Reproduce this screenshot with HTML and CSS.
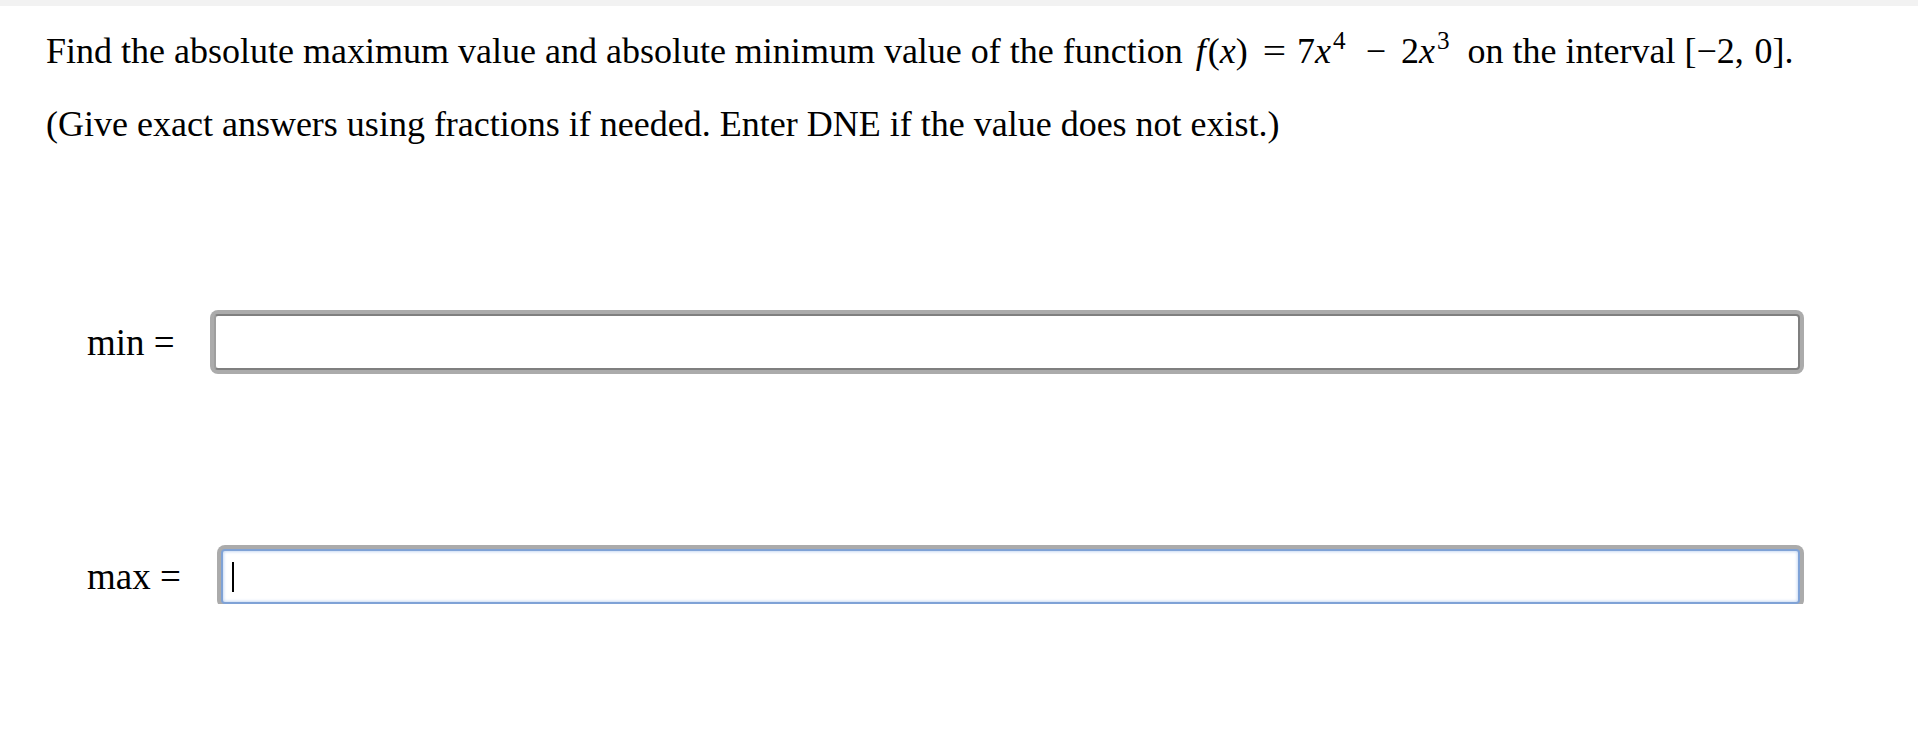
FILE: index.html
```html
<!DOCTYPE html>
<html lang="en">
<head>
<meta charset="utf-8">
<title>Problem</title>
<link rel="stylesheet" href="styles.css">
</head>
<body>
<div class="topbar"></div>
<main class="problem">
  <p class="text first">Find the absolute maximum value and absolute minimum value of the function <span class="math fx"><i>f</i>(<i>x</i>)<span class="rel">=</span>7<i>x</i><sup>4</sup><span class="bin">&minus;</span>2<i>x</i><sup>3</sup></span> on the interval <span class="math">[&minus;2,<span class="thin"></span>0]</span>.</p>
  <p class="text second">(Give exact answers using fractions if needed. Enter DNE if the value does not exist.)</p>
  <div class="row row-min">
    <span class="label">min =</span>
    <div class="field"><input class="box" type="text" aria-label="min"></div>
  </div>
  <div class="row row-max">
    <span class="label">max =</span>
    <div class="field focused"><input class="box" type="text" aria-label="max"><span class="caret"></span></div>
  </div>
</main>
</body>
</html>
```
FILE: styles.css
```css
html, body {
  margin: 0;
  padding: 0;
  background: #ffffff;
}
body {
  font-family: "Liberation Serif", "Times New Roman", serif;
  color: #000;
}
.topbar {
  height: 6px;
  background: #f2f2f2;
}
.problem {
  padding-left: 46px;
  padding-right: 118px;
}
.text {
  margin: 0;
  font-size: 36px;
  line-height: 40px;
  white-space: nowrap;
}
.first {
  margin-top: 25px;
}
.second {
  margin-top: 33px;
}
.math i {
  font-style: italic;
}
.fx {
  margin: 0 9px 0 4px;
}
.fx i:first-child {
  margin-right: 2px;
}
.math sup {
  font-size: 0.7em;
  line-height: 0;
  vertical-align: 0.55em;
  margin-left: 2px;
}
.rel {
  display: inline-block;
  padding: 0 13px 0 16px;
  transform: scaleX(1.15);
}
.bin {
  padding: 0 15px 0 20px;
}
.thin {
  display: inline-block;
  width: 0.3em;
}
.row {
  display: flex;
  align-items: center;
  gap: 39px;
  padding-left: 41px;
}
.row-min {
  margin-top: 170px;
}
.row-max {
  margin-top: 179px;
  gap: 40px;
}
.label {
  font-size: 37px;
  line-height: 43px;
  white-space: nowrap;
}
.field {
  position: relative;
  flex: 1;
  height: 56px;
  box-sizing: border-box;
  border: 2px solid #7f7f7f;
  border-left-color: #9e9e9e;
  border-radius: 4px;
  box-shadow: 0 0 0 4px #ababab;
  background: #fff;
}
.field.focused {
  height: 55px;
  border-color: #7fa2d6;
  box-shadow: 0 0 0 4px #ababab, inset 0 0 3px 1px #c9daf3;
}
.box {
  display: block;
  width: 100%;
  height: 100%;
  box-sizing: border-box;
  border: 0;
  outline: none;
  background: transparent;
  padding: 0 10px;
  font-family: "Liberation Serif", serif;
  font-size: 30px;
}
.caret {
  position: absolute;
  left: 9px;
  top: 11px;
  width: 2px;
  height: 30px;
  background: #000;
}
```
